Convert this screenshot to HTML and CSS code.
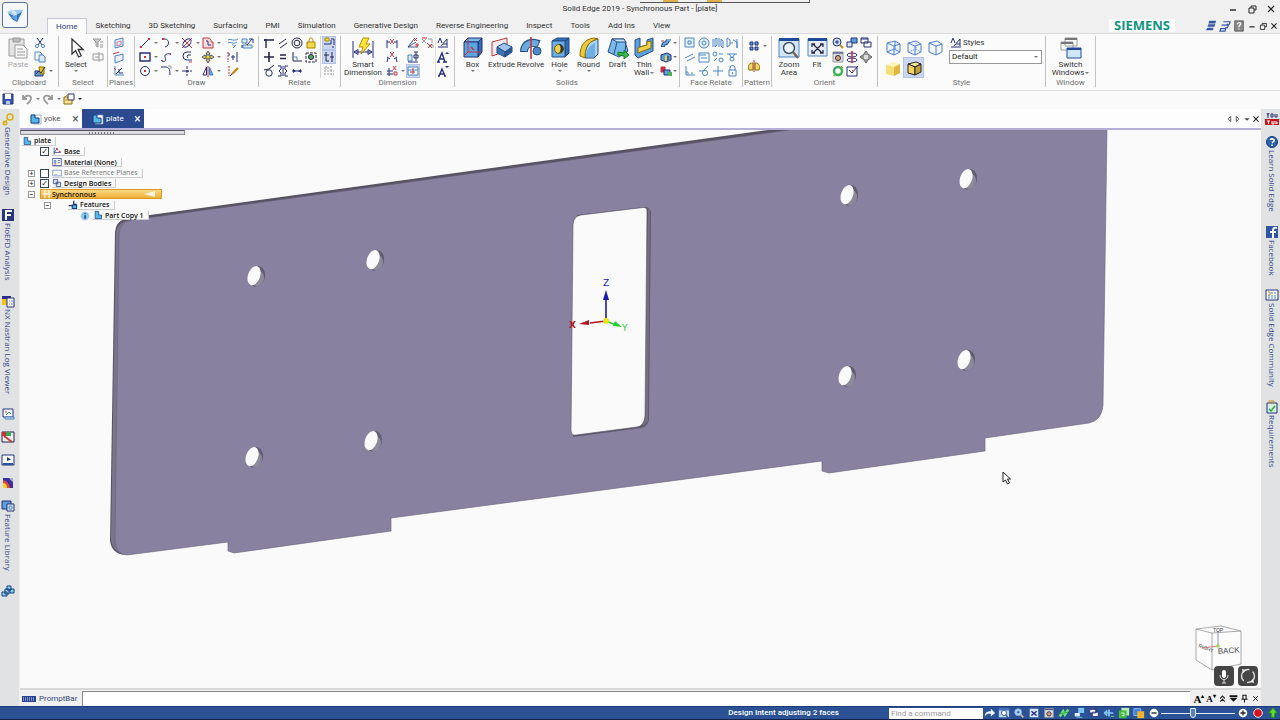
FILE: index.html
```
<!DOCTYPE html>
<html lang="en">
<head>
<meta charset="utf-8">
<title>Solid Edge 2019 - Synchronous Part - [plate]</title>
<link rel="stylesheet" href="styles.css">
</head>
<body>
<svg class="sprite" aria-hidden="true">
  <!-- clipboard and select -->
  <symbol id="paste" viewBox="0 0 24 24"><path class="sg" fill="#e4e4e4" d="M3 3h15v17H3z"/><path class="sg" fill="#bbb" d="M7 2h7v4H7z"/><path class="sg" fill="#fafafa" d="M9 9h8l4 4v9H9z"/><path class="sg" d="M11 13h6M11 16h8M11 19h8"/></symbol>
  <symbol id="cut" viewBox="0 0 14 14"><path class="sn" d="M4 2l5 7M10 2L5 9"/><circle class="sb" cx="4" cy="10" r="1.6"/><circle class="sb" cx="10" cy="10" r="1.6"/></symbol>
  <symbol id="copy" viewBox="0 0 14 14"><path class="sb" fill="#fff" d="M2 2h5l2 2v6H2z"/><path class="sb" fill="#dceaf8" d="M6 5h4l2 2v5H6z"/></symbol>
  <symbol id="props" viewBox="0 0 14 14"><path class="sn fb" d="M2 7h8v5H2z"/><path fill="#e8c21c" stroke="#8a6d00" d="M6 3h5v7H7z"/><path class="sn" d="M3 10l3-3 2 2 4-6"/></symbol>
  <symbol id="arrow" viewBox="0 0 24 24"><path fill="#fff" stroke="#333" stroke-width="1.3" d="M8 3v15l3.600-3.500 3 6.500 2.600-1.200-3-6.300h5z"/></symbol>
  <symbol id="filter" viewBox="0 0 14 14"><path class="sg" fill="#ccc" d="M2 3h8L7 6v5L5 10V6z"/><path class="sg" d="M9 6h3M9 9h3M9 11h3"/></symbol>
  <symbol id="selbox" viewBox="0 0 14 14"><path class="sg" d="M2 4h10v6H2zM4 7h4M8 2v10"/></symbol>
  <!-- planes -->
  <symbol id="plane1" viewBox="0 0 14 14"><path class="sb" fill="#eef" d="M3 4l8-2v8l-8 2z"/><path class="sr" stroke-width=".6" d="M5 6l4-1v4l-4 1z"/></symbol>
  <symbol id="plane2" viewBox="0 0 14 14"><path class="sb" fill="#eef" d="M3 6l8-2v6l-8 3z"/><path class="sr" d="M1 4l6-2"/></symbol>
  <symbol id="plane3" viewBox="0 0 14 14"><path class="sb" d="M3 2v9h9"/><path class="sn" d="M4 10l6-6M7 5v4h4"/><path class="sr" d="M2 4l2 2"/></symbol>
  <!-- draw -->
  <symbol id="line" viewBox="0 0 14 14"><path class="sn" d="M3 11l8-8"/><path class="fr" d="M2 10h2v2H2zM10 2h2v2h-2z"/></symbol>
  <symbol id="arc" viewBox="0 0 14 14"><path class="sn" d="M4 3c7-1 7 7 2 8"/><path class="fr" d="M3 2h2v2H3z"/></symbol>
  <symbol id="trim" viewBox="0 0 14 14"><path class="sr" d="M2 2l10 10M12 2L2 12"/><ellipse class="sn" cx="7" cy="7" rx="5" ry="3" transform="rotate(-45 7 7)"/></symbol>
  <symbol id="offset" viewBox="0 0 14 14"><path class="sr" fill="#f8dede" d="M2 2h5a3 3 0 0 1 3 4h2v6H2z"/><path class="sn" d="M5 5h2v4h3"/></symbol>
  <symbol id="wave" viewBox="0 0 14 14"><path class="sb" d="M2 4c3-2 5 2 10-1M2 7c3-2 5 2 9-1M6 9c1-1 2 2 4 0l-3 3"/></symbol>
  <symbol id="convert" viewBox="0 0 14 14"><path class="sb" fill="#dceaf8" d="M2 3h5v4H2zM3 9h9v3H3z"/><path class="sn" d="M2 12V9M7 9l5-6M9 3h4v4"/><path class="so" d="M5 7l3 3"/></symbol>
  <symbol id="rect" viewBox="0 0 14 14"><path class="sn" stroke-width="1.400" d="M2 3h10v8H2z"/><path class="fr" d="M6 6h2v2H6z"/></symbol>
  <symbol id="curve" viewBox="0 0 14 14"><path class="sn" d="M3 11c4 2 4-2 3-4s2-4 5-3"/><path class="fr" d="M2 10h2v1H2zM11 3h1v2h-1z"/></symbol>
  <symbol id="cshape" viewBox="0 0 14 14"><path class="sn" d="M11 2H7a4 4 0 0 0 0 8h5M11 5H8a2 2 0 0 0 0 3"/><path class="sr" d="M9 12h3"/></symbol>
  <symbol id="move" viewBox="0 0 14 14"><path class="sn" fill="#f4d03c" stroke-width=".8" d="M7 1l2 3H8v2h2V5l3 2-3 2V8H8v2h1l-2 3-2-3h1V8H4v1L1 7l3-2v1h2V4H5z"/></symbol>
  <symbol id="ptlines" viewBox="0 0 14 14"><path class="sn" d="M11 2v10M3 3v3M5 7h4M7 5v5"/><path class="sr" stroke-dasharray="2 1" d="M2 2v10"/></symbol>
  <symbol id="circle" viewBox="0 0 14 14"><circle class="sn" cx="7" cy="7" r="4.500"/><path class="fr" d="M6 6h2v2H6z"/></symbol>
  <symbol id="fillet" viewBox="0 0 14 14"><path class="sn" d="M2 3h4c4 0 5 2 5 8"/><path class="sg" d="M9 2h3v3"/></symbol>
  <symbol id="split" viewBox="0 0 14 14"><path class="sn" stroke-dasharray="3 1" d="M2 7h10M7 2v10"/><path class="sn" d="M5 7h4"/></symbol>
  <symbol id="mirror" viewBox="0 0 14 14"><path class="sn" d="M2 11l3.500-8v8z"/><path class="sb fb" d="M12 11L8.500 3v8z"/><path class="sr" d="M7 2v11"/></symbol>
  <symbol id="pencil" viewBox="0 0 14 14"><path class="sr" stroke-dasharray="2 1" d="M3 2v10"/><path class="so" stroke-width="2.400" d="M6 10l6-6"/><path class="sn" d="M4 12l2-2"/></symbol>
  <!-- relate -->
  <symbol id="connect" viewBox="0 0 14 14"><path class="sk" stroke-width="1.400" d="M4 12V4h8"/><path class="fn" d="M2 3h3v2H2z"/></symbol>
  <symbol id="parallel" viewBox="0 0 14 14"><path class="sk" d="M3 8l7-5M4 12l7-5"/></symbol>
  <symbol id="concentric" viewBox="0 0 14 14"><circle class="sk" cx="7" cy="7" r="5"/><circle class="sk" cx="7" cy="7" r="2.800"/></symbol>
  <symbol id="lock" viewBox="0 0 14 14"><path class="so" d="M5 6V4a2 2 0 0 1 4 0v2"/><path fill="#f3d94b" stroke="#a88400" d="M3 6h8v6H3z"/></symbol>
  <symbol id="plus" viewBox="0 0 14 14"><path class="sk" stroke-width="1.600" d="M2 7h10M7 2v10"/></symbol>
  <symbol id="equal" viewBox="0 0 14 14"><path class="sk" stroke-width="1.600" d="M4 5h6M4 8.500h6"/></symbol>
  <symbol id="perp" viewBox="0 0 14 14"><path class="sk" d="M3 2v9h9"/><path class="sb" d="M3 7h4v4"/></symbol>
  <symbol id="rigid" viewBox="0 0 14 14"><path class="sk" stroke-dasharray="3 1" d="M2 3h10v9H2z"/><circle class="sk fg" cx="7" cy="7" r="2.500"/></symbol>
  <symbol id="tangent" viewBox="0 0 14 14"><circle class="sn" cx="7" cy="9" r="3.200"/><path class="sk" d="M2 6l5-1 5-4"/></symbol>
  <symbol id="symm" viewBox="0 0 14 14"><path class="sn" d="M2 2h3v3L3 7l2 2v3H2M12 2H9v3l2 2-2 2v3h3M7 2v10"/></symbol>
  <symbol id="collin" viewBox="0 0 14 14"><path class="sn" d="M2 7h10"/><path class="fn" d="M3 5l3 2-3 2zM11 5L8 7l3 2z"/></symbol>
  <symbol id="maintain" viewBox="0 0 14 14"><path fill="#f3d94b" stroke="#a88400" d="M3 2h4v3H3z"/><path class="sn" d="M2 8h7M9 3h3v6M10 11h2M9 4v4"/></symbol>
  <symbol id="handles" viewBox="0 0 14 14"><path class="sk" d="M4 2v9h3M10 2v10M2 5h5M8 7h4"/></symbol>
  <symbol id="hgray" viewBox="0 0 14 14"><path class="sg" stroke-dasharray="2 1" d="M2 4h5M9 2v5M2 7h10M2 10h10M4 2v4"/></symbol>
  <!-- dimension -->
  <symbol id="smart" viewBox="0 0 24 24"><path class="sn" d="M2 5v17M22 5v17M3 16h18M3 16l4-2.500v5zM21 16l-4-2.500v5z"/><path fill="#ffe53b" stroke="#b98f00" d="M12 2l6 0-3 6h4l-9 10 2-7H8z"/></symbol>
  <symbol id="dist" viewBox="0 0 14 14"><path class="sn" d="M2 4v8M12 4v8M2 6h3M9 6h3"/><path class="sr" d="M5 3l4 5M9 3L5 8"/></symbol>
  <symbol id="angle" viewBox="0 0 14 14"><path class="sn" d="M3 8l-1 4M11 8l1 4M5 9l-3-2M9 9l3-2"/><path class="sr" d="M5 2l4 5M9 2L5 7"/></symbol>
  <symbol id="coord" viewBox="0 0 14 14"><path class="sn" d="M2 7h6M2 10h6M4 4v8"/><path class="sr" d="M8 2l3 4M11 2L8 6M9 8h3v3H9z"/></symbol>
  <symbol id="angc" viewBox="0 0 14 14"><path class="sn" stroke-width=".8" d="M2 11h10M2 11l6-8M2 11l8-5"/><path class="sr" d="M8 2l3 3M11 2L8 5M10 8h2v2h-2z"/></symbol>
  <symbol id="symd" viewBox="0 0 14 14"><path class="sg" d="M2 3l4 4M6 3L2 7M8 3h4v4M9 9h4v3"/><path class="sr" d="M2 2h5M7 7l5 5M12 8l-4 4"/></symbol>
  <symbol id="attach" viewBox="0 0 14 14"><path class="sb" fill="#dceaf8" d="M2 11V5h4v6z"/><path class="sn" d="M2 12h10M8 2h4M10 2v9M8 5h4v3H8z"/></symbol>
  <symbol id="table" viewBox="0 0 14 14"><path class="sb" fill="#fff" d="M2 3h10v8H2zM2 6h10"/><path class="sr" d="M7 4v6M4 8h5"/></symbol>
  <symbol id="aslash" viewBox="0 0 14 14"><path class="sn" d="M2 7l2-5 2 5M5 10l6-7v7M2 11h10M7 8h4"/></symbol>
  <symbol id="abig" viewBox="0 0 14 14"><path class="sn" stroke-width="1.400" d="M2 12l4-9 3 9M4 9h4M1 12h3M7 12h4"/><path class="fn" d="M9 4l2-2 2 2z"/></symbol>
  <symbol id="asmall" viewBox="0 0 14 14"><path class="sn" stroke-width="1.400" d="M3 12l3-7 3 7M4 10h4M2 12h2M8 12h2"/><path class="fn" d="M9 2h4l-2 2z"/></symbol>
  <!-- solids -->
  <symbol id="box" viewBox="0 0 24 24"><path fill="#7db8e6" stroke="#24307a" d="M3 6l4-4h14l-4 4z"/><path fill="#2f6fb4" stroke="#24307a" d="M17 6l4-4v14l-4 5z"/><path fill="#5aa6e0" stroke="#24307a" d="M3 6h14v15H3z"/><path class="sr" d="M7 3v13h13M7 16l-4 4"/><path class="sr" stroke-width="1.500" d="M10 11l3 3"/></symbol>
  <symbol id="extrude" viewBox="0 0 24 24"><path class="sr" fill="#f6eeee" d="M2 6l15-4v13L2 20z"/><path fill="#9fc6ea" stroke="#244f86" d="M7 11l7-4 8 4-7 5z"/><path fill="#3d77b6" stroke="#244f86" d="M7 11l8 5v5l-8-4z"/><path fill="#2b5a95" stroke="#244f86" d="M22 11v5l-7 5v-5z"/></symbol>
  <symbol id="revolve" viewBox="0 0 24 24"><path stroke="#244f86" stroke-width="8" d="M5 16c0-9 8-11 15-8"/><path stroke="#6aaade" stroke-width="6" d="M5 15c1-8 8-9 14-7"/><circle cx="18" cy="15" r="4" fill="#4d8ccb" stroke="#244f86"/><path class="sr" stroke-width="1.600" d="M12 1v22"/></symbol>
  <symbol id="hole" viewBox="0 0 24 24"><path fill="#2f6fb4" stroke="#244f86" d="M4 5l5-3h12l-4 3zM17 5l4-3v15l-4 4z"/><path fill="#69aee6" stroke="#244f86" d="M4 5h13v16H4z"/><circle cx="11" cy="13" r="4.500" fill="#f0d24e" stroke="#7a5c00"/><path fill="#333" d="M11 8a4.500 4.500 0 0 1 0 9 7 7 0 0 0 0-9z"/></symbol>
  <symbol id="round" viewBox="0 0 24 24"><path fill="#a9d2f3" stroke="#244f86" d="M8 22C8 10 12 5 21 3v15l-4 4z"/><path fill="#f0c93a" stroke="#8a6d00" d="M3 20C3 9 8 3 17 2l4 1C12 5 8 10 8 22z"/><path fill="#6fb0e4" d="M9 21c0-7 3-11 9-14v14z"/></symbol>
  <symbol id="draft" viewBox="0 0 24 24"><path fill="#79b8ea" stroke="#244f86" d="M6 3h12l4 12-9 6L2 16z"/><path fill="#cfe6f8" stroke="#244f86" d="M6 3l5 3h9l-2-3z"/><path stroke="#244f86" d="M11 6L8 18M20 6l-1 10"/><path fill="#35b54a" stroke="#157a26" d="M12 16l6 1v-3l5 5-5 4v-3l-6-1z"/></symbol>
  <symbol id="thin" viewBox="0 0 24 24"><path fill="#5aa0dc" stroke="#244f86" d="M3 4l5-2v9l7-2V4l6-2v13L6 22l-3-3z"/><path fill="#f0d24e" stroke="#8a6d00" d="M8 11l7-2v-3l4-1v7L6 17v-5z"/></symbol>
  <symbol id="sweep" viewBox="0 0 14 14"><path stroke="#244f86" stroke-width="4" d="M4 11c0-6 3-1 5-7"/><path stroke="#69aee6" stroke-width="2" d="M4 10c1-5 4-1 5-6h3"/><path class="sr" d="M2 5h3"/></symbol>
  <symbol id="block" viewBox="0 0 14 14"><path class="sn fb" d="M2 5l6-2 4 2v5l-5 2-5-2z"/><path fill="#f0d24e" d="M6 6l2-1v6H6z"/><path class="sk" d="M9 6v4"/></symbol>
  <symbol id="union" viewBox="0 0 14 14"><path class="sr fr" d="M2 3h4v5H2z"/><path class="sn fb" d="M5 6h6v5H5z"/><path class="fg" d="M9 8h4v4H9z"/></symbol>
  <!-- face relate -->
  <symbol id="coplanar" viewBox="0 0 14 14"><path class="sb" fill="#e5f1fb" d="M2 2h9v9H2zM5 5h3v3H5z"/></symbol>
  <symbol id="fconc" viewBox="0 0 14 14"><circle class="sb" cx="7" cy="7" r="5" fill="#e5f1fb"/><circle class="sb" cx="7" cy="7" r="2"/></symbol>
  <symbol id="fsym" viewBox="0 0 14 14"><path class="sb" d="M2 3v8M4 3v8l2-2V2zM8 2v9M10 3v7l2 2V5z"/></symbol>
  <symbol id="foff" viewBox="0 0 14 14"><path class="sb" d="M2 2v9l3-2V4zM5 7h3M8 4l4 2v6M12 3v9"/></symbol>
  <symbol id="fpar" viewBox="0 0 14 14"><path class="sb" d="M2 8l8-4M4 11l8-4"/></symbol>
  <symbol id="falign" viewBox="0 0 14 14"><path class="sb" d="M2 3h10v9H2zM4 8h6M2 5h7"/></symbol>
  <symbol id="fequal" viewBox="0 0 14 14"><circle class="sb" cx="4" cy="4" r="2"/><circle class="sb" cx="10" cy="10" r="2"/><path class="sb" d="M3 11l3-3M8 4h4"/></symbol>
  <symbol id="fhoriz" viewBox="0 0 14 14"><path class="sb" d="M2 4h10M4 4l3 4 3-4"/><circle class="sb" cx="7" cy="9" r="2"/></symbol>
  <symbol id="fperp" viewBox="0 0 14 14"><path class="sb" d="M3 2v9h9M3 8h2v3M8 9h2"/></symbol>
  <symbol id="ftan" viewBox="0 0 14 14"><circle class="sb" cx="8" cy="9" r="2.600"/><path class="sb" d="M2 7h4l5-5"/></symbol>
  <symbol id="fplus" viewBox="0 0 14 14"><path class="sb" d="M2 7h10M7 2v10"/></symbol>
  <symbol id="flock" viewBox="0 0 14 14"><path class="sb" d="M4 6h7v6H4zM5 6V4a2 2 0 0 1 5 0v2M7.500 8v2"/></symbol>
  <!-- pattern -->
  <symbol id="pattern" viewBox="0 0 14 14"><path class="sn fb" d="M3 3h3v3H3zM8 3h3v3H8zM3 8h3v3H3zM8 8h3v3H8z"/></symbol>
  <symbol id="pmirror" viewBox="0 0 14 14"><path fill="#f4d86a" stroke="#8a6d00" d="M6 4c-5 0-5 4-4 7h4zM8 4c5 0 5 4 4 7H8z"/><path class="sr" d="M7 1v12"/></symbol>
  <!-- orient -->
  <symbol id="zoomarea" viewBox="0 0 24 24"><path class="sb" fill="#d5e4f6" d="M2 3h20v18H2z"/><path fill="#1f4a9a" d="M2 2h20v3H2z"/><circle cx="12" cy="12" r="5.500" fill="#eaf6fd" stroke="#456" stroke-width="1.500"/><path stroke="#765" stroke-width="2.500" d="M16 16l5 6"/></symbol>
  <symbol id="fit" viewBox="0 0 24 24"><path class="sb" fill="#e4ecf8" d="M3 3h19v17H3z"/><path fill="#1f4a9a" d="M3 2h19v3H3z"/><path class="sk" stroke-width="1.300" d="M8 8l9 9M17 8l-9 9M7 11V8h3M15 8h3v3M18 14v3h-3M10 17H7v-3"/></symbol>
  <symbol id="zoom" viewBox="0 0 14 14"><circle class="sn" cx="6" cy="6" r="4" fill="#cfe4f8"/><path class="sn" d="M6 4v4M4 6h4"/><path class="so" stroke-width="2" d="M9 9l3 3"/></symbol>
  <symbol id="pan" viewBox="0 0 14 14"><path class="sn fb" d="M6 2h6v5H6z"/><path class="sn" fill="#dceaf8" d="M2 6h5v5H2z"/></symbol>
  <symbol id="windows" viewBox="0 0 14 14"><path class="sn" fill="#fff" d="M2 2h7v5H2zM5 6h7v5H5z"/><path class="sn" d="M2 3h7"/></symbol>
  <symbol id="camera" viewBox="0 0 14 14"><path class="sg" fill="#ddd" d="M2 2h10v10H2z"/><path class="sn" d="M2 3h10"/><circle class="sk" cx="7" cy="8" r="2.500" fill="#d9a577"/></symbol>
  <symbol id="spin" viewBox="0 0 14 14"><ellipse class="sn" cx="7" cy="5" rx="5" ry="2"/><ellipse class="sn" cx="7" cy="10" rx="5" ry="2"/><path class="sr" stroke-width="1.600" d="M7 1v12"/></symbol>
  <symbol id="graymove" viewBox="0 0 14 14"><path fill="#999" stroke="#666" d="M7 1l2 3 4 3-4 3-2 3-2-3-4-3 4-3z"/><path fill="#ddd" d="M5 5h4v4H5z"/></symbol>
  <symbol id="rotate" viewBox="0 0 14 14"><circle cx="7" cy="7" r="4" stroke="#35b54a" stroke-width="2.400"/><path class="sb" d="M3 7a4 4 0 0 1 4-4"/><path class="so" d="M10 2l2 2M2 11l2 1"/></symbol>
  <symbol id="sketchview" viewBox="0 0 14 14"><path class="sn" fill="#fff" d="M2 3h10v9H2z"/><path class="sk" d="M4 6l3 3 6-7"/><path class="sr" d="M7 6l2 2"/></symbol>
  <symbol id="cubewire" viewBox="0 0 20 20"><path class="sv" fill="#eef4fc" d="M4 6l8-2 5 3v8l-6 3-7-3zM4 6l7 3 6-2M11 9v9M4 15l7-3 6 3M12 4v8"/></symbol>
  <symbol id="cubedash" viewBox="0 0 20 20"><path class="sv" fill="#f2f6fc" d="M4 6l8-2 5 3v8l-6 3-7-3zM4 6l7 3 6-2M11 9v9"/><path class="sv" stroke-dasharray="1 1" d="M12 4v8l5 3M12 12l-8 3"/></symbol>
  <symbol id="cubeline" viewBox="0 0 20 20"><path class="sv" fill="#f6f8fd" d="M4 6l8-2 5 3v8l-6 3-7-3zM4 6l7 3 6-2M11 9v9"/></symbol>
  <symbol id="cubefill" viewBox="0 0 20 20"><path fill="#fdf3b8" d="M3 7l8-3 6 2-6 3z"/><path fill="#f7df78" d="M3 7l8 2v9l-8-2z"/><path fill="#e0b740" d="M11 9l6-3v9l-6 3z"/></symbol>
  <symbol id="cubeedge" viewBox="0 0 20 20"><path fill="#fbeb9a" stroke="#222" d="M4 6l8-2 5 2-6 3z"/><path fill="#f2d35c" stroke="#222" d="M4 6l7 3v8l-7-2z"/><path fill="#c89f35" stroke="#222" d="M11 9l6-3v8l-6 3z"/></symbol>
  <symbol id="switch" viewBox="0 0 24 24"><path class="sg" fill="#fff" d="M6 2h12v8H6zM2 6h12v8H2z"/><path stroke="#777" stroke-width="2" d="M6 3h12M2 7h12"/><path fill="#cfe6fb" stroke="#1f4a9a" d="M8 12h14v10H8z"/><path stroke="#1f4a9a" stroke-width="2" d="M8 13h14"/></symbol>
  <!-- quick access, tabs, tree -->
  <symbol id="save" viewBox="0 0 14 14"><path fill="#3c55b5" stroke="#27357c" d="M2 2h10v10H2z"/><path fill="#fff" d="M4 2h6v5H4z"/><path fill="#bcd" d="M5 9h4v3H5z"/></symbol>
  <symbol id="undo" viewBox="0 0 14 14"><path class="sg" stroke-width="1.800" d="M3 3v4h4M3 7c3-5 9-4 8 0-1 3-3 4-4 5"/></symbol>
  <symbol id="redo" viewBox="0 0 14 14"><path class="sg" stroke-width="1.800" d="M11 3v4H7M11 7C8 2 2 3 3 7c1 3 3 4 4 5"/></symbol>
  <symbol id="sheet" viewBox="0 0 14 14"><path fill="#f8e3a0" stroke="#8a6d00" d="M2 5h8v7H2z"/><path class="sn" fill="#fff" d="M6 2h6v6H6z"/><path class="so" d="M3 5l3-3M3 8h6"/></symbol>
  <symbol id="part" viewBox="0 0 14 14"><path fill="#fff" stroke="#7d93ad" stroke-width=".7" d="M4 3h8v9H4z"/><path fill="#55b7ea" stroke="#123f7a" d="M2 3h4v3h4v5H2z"/></symbol>
  <symbol id="partsm" viewBox="0 0 14 14"><path fill="#55b7ea" stroke="#123f7a" d="M3 2h5v5h4v5H3z"/></symbol>
  <symbol id="axes" viewBox="0 0 14 14"><path class="sn" d="M3 2v10M3 9h9M3 9l5-6"/><path class="sr" stroke-width="1.600" d="M6 3l2 3M10 7l2 2"/></symbol>
  <symbol id="material" viewBox="0 0 14 14"><path class="sn" fill="#fff" d="M1 2h12v10H1z"/><path class="fb" d="M3 4h3v5H3z"/><path class="sr" d="M3 10h3"/><path class="sn" d="M8 5h3M8 8h3"/></symbol>
  <symbol id="refplane" viewBox="0 0 14 14"><path class="sb" fill="#fff" d="M1 3h12v8H1z"/><path class="sg" d="M3 9h4"/></symbol>
  <symbol id="bodies" viewBox="0 0 14 14"><path class="sn" fill="#cfe4f8" d="M2 2h6v6H2zM6 6h6v6H6z"/></symbol>
  <symbol id="sync" viewBox="0 0 14 14"><path stroke="#fff" stroke-width="1.500" d="M4 1v12M10 1v12M1 7h12"/></symbol>
  <symbol id="features" viewBox="0 0 14 14"><path fill="#55b7ea" stroke="#123f7a" stroke-width="1.500" d="M6 7h6v5H6z"/><path class="sn" stroke-width="1.800" d="M1 8h5M8 1v5h4"/></symbol>
  <symbol id="info" viewBox="0 0 14 14"><circle cx="7" cy="7" r="6" fill="#8ec3ea" stroke="#d4e7f5"/><path stroke="#0b3d83" stroke-width="2" d="M7 3v1.500M7 6v5"/></symbol>
  <!-- side rails -->
  <symbol id="key" viewBox="0 0 14 14"><path stroke="#d9b20e" stroke-width="1.600" d="M6 8l-3 3"/><circle cx="9" cy="5" r="3" stroke="#d9b20e" stroke-width="1.600"/><circle cx="4" cy="11" r="1.800" stroke="#d9b20e" stroke-width="1.400"/></symbol>
  <symbol id="flo" viewBox="0 0 14 14"><path fill="#26357e" d="M1 1h12v12H1z"/><path stroke="#fff" stroke-width="2" d="M5 12V3h6M5 7h5"/></symbol>
  <symbol id="nastran" viewBox="0 0 14 14"><path fill="#d33" d="M1 2h6v9H1z"/><path fill="#f2c21d" d="M1 5h5v6H1z"/><path fill="#302a8c" d="M1 2h9v3H1z"/><path class="sn" fill="#fff" d="M6 4h7v9H6z"/><path class="sb" d="M8 7h1M10 7h2M8 10h1M10 10h2"/></symbol>
  <symbol id="copydoc" viewBox="0 0 14 14"><path class="sn" fill="#fff" d="M2 2h10v8H2z"/><path class="sb" fill="#cde" d="M4 10h9v2H4z"/><path stroke="#3a4" d="M5 8l3-3 2 2"/><path class="sr" d="M4 5h2"/></symbol>
  <symbol id="gauge" viewBox="0 0 14 14"><path class="sk" fill="#eee" d="M1 2h12v10H1z"/><path fill="#c33" d="M1 2h4v4H1z"/><path fill="#3a5" d="M5 2h5v4H5z"/><path class="sr" stroke-width="1.600" d="M3 6l8 6"/></symbol>
  <symbol id="movie" viewBox="0 0 14 14"><path class="sn" fill="#fff" d="M1 2h12v10H1z"/><path class="fn" d="M6 4l4 2.500L6 8z"/><path stroke="#26579c" stroke-width="2" d="M2 11h10"/></symbol>
  <symbol id="heat" viewBox="0 0 14 14"><path fill="#3b2f9c" d="M2 2h10v10H2z"/><path fill="#d44" d="M2 4q6 1 7 8H2z"/><path fill="#f6d32a" d="M2 7q4 0 4 5H2z"/><path fill="#aac" d="M8 2h4v4q-2-1-4-4z"/></symbol>
  <symbol id="library" viewBox="0 0 14 14"><path class="sn fb" d="M1 2h9v8H1z"/><path class="sn" fill="#dff0fb" d="M6 5h7v7H6z"/><path class="sb" d="M8 7h3v3H8z"/></symbol>
  <symbol id="cubes" viewBox="0 0 14 14"><path fill="#8ed0f2" stroke="#123f7a" d="M6 2h4v4H6zM9 5h4v4H9zM4 5h4v5H4zM1 8h5v4H1z"/></symbol>
  <symbol id="youtube" viewBox="0 0 14 14"><path class="sn" d="M2 1l1 2 1-2M3 3v3M6 2h2v3H6zM10 2v3h2V2"/><path fill="#c4161c" d="M0 7h14v6H0z"/><path stroke="#fff" d="M2 9h3M3.500 9v3M7 9v3h2V9M11 9v3M11 11h2"/></symbol>
  <symbol id="learn" viewBox="0 0 14 14"><circle cx="7" cy="7" r="5.500" fill="#2b62b0" stroke="#163a78"/><path stroke="#fff" stroke-width="1.500" d="M5 5c1-2 5-1 4 1L7 8M7 9.500v1.500"/></symbol>
  <symbol id="fb" viewBox="0 0 14 14"><path fill="#2f55a4" d="M1 1h12v12H1z"/><path stroke="#fff" stroke-width="2" d="M12 3c-3-1-4 0-4 3v7M5 7h6"/></symbol>
  <symbol id="community" viewBox="0 0 14 14"><path class="sn" fill="#fff" d="M1 2h12v10H1z"/><path class="so" d="M3 4h2v3H3"/><path class="sb" stroke-dasharray="2 1" d="M6 5h6M3 8h9M3 10h9"/></symbol>
  <symbol id="reqs" viewBox="0 0 14 14"><path class="sn" fill="#d6f0de" d="M2 3h10v10H2z"/><path class="so" d="M4 4V1h5v3"/><path stroke="#2aa745" stroke-width="1.500" d="M4 9l2 2 4-5"/></symbol>
  <!-- window controls and status bar -->
  <symbol id="min" viewBox="0 0 14 14"><path stroke="#222" stroke-width="1.400" d="M4 8h6"/></symbol>
  <symbol id="restore" viewBox="0 0 14 14"><path stroke="#222" d="M6 6V4h5v4H9M4 6h5v5H4z"/></symbol>
  <symbol id="close" viewBox="0 0 14 14"><path stroke="#222" stroke-width="1.200" d="M4 4l6 6M10 4l-6 6"/></symbol>
  <symbol id="stack" viewBox="0 0 14 14"><path fill="#3456a8" d="M5 1h8l-1 3H4zM4 5h8l-1 3H3zM3 9h7l-1 3H1z"/></symbol>
  <symbol id="stack2" viewBox="0 0 14 14"><path stroke="#3456a8" stroke-width="1.300" d="M5 2h8l-1 3H9M3 6h8l-1 3H7M2 10h6l-1 3H1z"/></symbol>
  <symbol id="help" viewBox="0 0 14 14"><path fill="#8a8a8a" stroke="#555" d="M2 1h10v12H2z"/><path stroke="#fff" stroke-width="1.400" d="M5 5c0-3 5-2 4 0L7 7v1.500M7 10v1"/></symbol>
  <symbol id="tleft" viewBox="0 0 14 14"><path stroke="#444" d="M9 4v6L6 7z"/></symbol>
  <symbol id="tright" viewBox="0 0 14 14"><path stroke="#444" d="M5 4v6l3-3z"/></symbol>
  <symbol id="tdown" viewBox="0 0 14 14"><path fill="#444" d="M4 6h6l-3 3z"/></symbol>
  <symbol id="keyboard" viewBox="0 0 14 14"><path fill="#26428c" d="M0 4h14v6H0z"/><path stroke="#dfe8ff" stroke-dasharray="1 1" d="M1 6h12M1 8h12"/></symbol>
  <symbol id="chev" viewBox="0 0 14 14"><path stroke="#222" stroke-width="1.400" d="M4 7l3-3 3 3M4 11l3-3 3 3"/></symbol>
  <symbol id="bardown" viewBox="0 0 14 14"><path fill="#111" d="M2 3h10v2H2zM2 6h10l-5 5z"/></symbol>
  <symbol id="pin" viewBox="0 0 14 14"><path stroke="#111" stroke-width="1.300" d="M5 3h4v5H5zM3 8h8M7 8v4"/></symbol>
  <symbol id="go" viewBox="0 0 14 14"><path fill="#e6f2ff" d="M1 11c0-5 3-6 7-6V2l5 5-5 4V8c-3 0-5 0-7 3z"/></symbol>
  <symbol id="s-area" viewBox="0 0 14 14"><path fill="#b8d4f4" d="M1 2h12v10H1z"/><path fill="#3c6fc0" d="M1 2h12v2H1z"/><circle cx="7" cy="7" r="3" fill="#fff" stroke="#357"/><path stroke="#357" stroke-width="1.500" d="M9 9l3 4"/></symbol>
  <symbol id="s-zoom" viewBox="0 0 14 14"><circle cx="6" cy="6" r="4" fill="#bfe0ff" stroke="#6ea6e6"/><path stroke="#1f4a9a" d="M4 6h4M6 4v4"/><path stroke="#d9b78c" stroke-width="2" d="M9 9l3 3"/></symbol>
  <symbol id="s-fit" viewBox="0 0 14 14"><path fill="#d5e4fb" d="M2 2h10v10H2z"/><path class="sn" stroke-width="1.600" d="M4 5l6 5M10 5l-6 5"/></symbol>
  <symbol id="s-green" viewBox="0 0 14 14"><path stroke="#6fe36f" stroke-width="3" d="M2 11l4-6 2 4 4-6"/><path stroke="#1fa53a" d="M2 8l10-2"/></symbol>
  <symbol id="s-pan" viewBox="0 0 14 14"><path fill="#7cc3f5" d="M6 1h7v6H6z"/><path fill="#d8efff" d="M2 7h6v4H2z"/><path stroke="#7cc3f5" d="M4 12h7"/></symbol>
  <symbol id="s-move" viewBox="0 0 14 14"><path stroke="#87c7ff" stroke-width="2" d="M2 7h10M7 3v8M5 4L2 7l3 3"/><path stroke="#5ee07d" d="M9 11h4"/></symbol>
  <symbol id="s-play" viewBox="0 0 14 14"><path fill="#b8efb0" d="M4 1h9v9H4z"/><path fill="#45bd3f" d="M1 4h9v9H1z"/><path stroke="#fff" d="M4 7h3v3H5"/></symbol>
  <symbol id="s-win" viewBox="0 0 14 14"><path fill="#3f7fe0" stroke="#9cc3f7" d="M1 2h8v8H1z"/><path fill="#f2b52a" d="M5 5h8v8H5z"/></symbol>
  <symbol id="s-minus" viewBox="0 0 14 14"><circle cx="7" cy="7" r="5" fill="#fff"/><path stroke="#223" stroke-width="1.600" d="M4 7h6"/></symbol>
  <symbol id="s-plus" viewBox="0 0 14 14"><circle cx="7" cy="7" r="5" fill="#fff"/><path stroke="#223" stroke-width="1.600" d="M4 7h6M7 4v6"/></symbol>
  <symbol id="s-rec" viewBox="0 0 14 14"><circle cx="7" cy="7" r="5" fill="#d9121c" stroke="#fff"/></symbol>
  <symbol id="s-up" viewBox="0 0 14 14"><path fill="#5fe02e" stroke="#2b8a10" d="M7 1l5 6H9v5H5V7H2z"/></symbol>
</svg>

<header class="titlebar">
  <button class="app" aria-label="Application menu"><svg viewBox="0 0 24 24"><path fill="#9fc8ee" d="M4 9l5-2 11 0-1 3-10 3z"/><path fill="#2d74c4" d="M5 10l6 3 8-4-5 10-5-3z"/><path fill="#d3e7f8" d="M8 6l5 3 1 4-5-3z"/><path fill="#5aa3e0" d="M8 14l6-2v6z"/></svg></button>
  <div class="notch"></div>
  <h1>Solid Edge 2019 - Synchronous Part - [plate]</h1>
  <div class="wincontrols">
    <button aria-label="Minimize"><svg><use href="#min"/></svg></button>
    <button aria-label="Restore"><svg><use href="#restore"/></svg></button>
    <button aria-label="Close"><svg><use href="#close"/></svg></button>
  </div>
</header>

<nav class="tabs" aria-label="Ribbon tabs">
  <button class="tab active">Home</button><button class="tab">Sketching</button><button class="tab">3D Sketching</button><button class="tab">Surfacing</button><button class="tab">PMI</button><button class="tab">Simulation</button><button class="tab">Generative Design</button><button class="tab">Reverse Engineering</button><button class="tab">Inspect</button><button class="tab">Tools</button><button class="tab">Add Ins</button><button class="tab">View</button>
  <span class="brand">SIEMENS</span>
  <div class="doccontrols">
    <button aria-label="Cascade"><svg><use href="#stack"/></svg></button>
    <button aria-label="Tile"><svg><use href="#stack2"/></svg></button>
    <button aria-label="Help"><svg><use href="#help"/></svg></button>
    <button class="sm" aria-label="Minimize document"><svg><use href="#min"/></svg></button>
    <button class="sm" aria-label="Restore document"><svg><use href="#restore"/></svg></button>
    <button class="sm" aria-label="Close document"><svg><use href="#close"/></svg></button>
  </div>
</nav>

<section class="ribbon" aria-label="Home ribbon">
  <div class="group clip"><div class="tools">
    <button class="big off"><svg><use href="#paste"/></svg>Paste</button>
    <div class="grid">
      <button aria-label="Cut"><svg><use href="#cut"/></svg></button>
      <button aria-label="Copy"><svg><use href="#copy"/></svg></button>
      <button class="split" aria-label="Copy properties"><svg><use href="#props"/></svg><i></i></button>
    </div></div><h2>Clipboard</h2></div>
  <div class="group sel"><div class="tools">
    <button class="big"><svg><use href="#arrow"/></svg>Select<i></i></button>
    <div class="grid">
      <button aria-label="Selection filter"><svg><use href="#filter"/></svg></button>
      <button aria-label="Selection options"><svg><use href="#selbox"/></svg></button>
    </div></div><h2>Select</h2></div>
  <div class="group planes"><div class="tools"><div class="grid">
      <button aria-label="Coincident plane"><svg><use href="#plane1"/></svg></button>
      <button aria-label="More planes"><svg><use href="#plane2"/></svg></button>
      <button aria-label="Coordinate system"><svg><use href="#plane3"/></svg></button>
    </div></div><h2>Planes</h2></div>
  <div class="group draw"><div class="tools"><div class="grid">
      <button class="split" aria-label="Line"><svg><use href="#line"/></svg><i></i></button>
      <button class="split" aria-label="Rectangle"><svg><use href="#rect"/></svg><i></i></button>
      <button class="split" aria-label="Circle"><svg><use href="#circle"/></svg><i></i></button>
      <button class="split" aria-label="Arc"><svg><use href="#arc"/></svg><i></i></button>
      <button aria-label="Curve"><svg><use href="#curve"/></svg></button>
      <button class="split" aria-label="Fillet"><svg><use href="#fillet"/></svg><i></i></button>
      <button class="split" aria-label="Trim"><svg><use href="#trim"/></svg><i></i></button>
      <button aria-label="Trim corner"><svg><use href="#cshape"/></svg></button>
      <button aria-label="Split"><svg><use href="#split"/></svg></button>
      <button class="split" aria-label="Offset"><svg><use href="#offset"/></svg><i></i></button>
      <button class="split" aria-label="Move"><svg><use href="#move"/></svg><i></i></button>
      <button class="split" aria-label="Mirror"><svg><use href="#mirror"/></svg><i></i></button>
    </div><div class="grid spaced">
      <button aria-label="Project to sketch"><svg><use href="#wave"/></svg></button>
      <button aria-label="Construction"><svg><use href="#ptlines"/></svg></button>
      <button aria-label="Clean sketch"><svg><use href="#pencil"/></svg></button>
      <button aria-label="Convert"><svg><use href="#convert"/></svg></button>
    </div></div><h2>Draw</h2></div>
  <div class="group relate"><div class="tools"><div class="grid">
      <button aria-label="Connect"><svg><use href="#connect"/></svg></button>
      <button aria-label="Horizontal/Vertical"><svg><use href="#plus"/></svg></button>
      <button aria-label="Tangent"><svg><use href="#tangent"/></svg></button>
      <button aria-label="Parallel"><svg><use href="#parallel"/></svg></button>
      <button aria-label="Equal"><svg><use href="#equal"/></svg></button>
      <button aria-label="Symmetric"><svg><use href="#symm"/></svg></button>
      <button aria-label="Concentric"><svg><use href="#concentric"/></svg></button>
      <button aria-label="Perpendicular"><svg><use href="#perp"/></svg></button>
      <button aria-label="Collinear"><svg><use href="#collin"/></svg></button>
      <button aria-label="Lock"><svg><use href="#lock"/></svg></button>
      <button aria-label="Rigid set"><svg><use href="#rigid"/></svg></button>
    </div><div class="grid ruled">
      <button class="on" aria-label="Maintain relationships"><svg><use href="#maintain"/></svg></button>
      <button class="on" aria-label="Relationship handles"><svg><use href="#handles"/></svg></button>
      <button aria-label="Relationship assistant"><svg><use href="#hgray"/></svg></button>
    </div></div><h2>Relate</h2></div>
  <div class="group dim"><div class="tools">
    <button class="big"><svg><use href="#smart"/></svg>Smart<br>Dimension</button>
    <div class="grid">
      <button aria-label="Distance between"><svg><use href="#dist"/></svg></button>
      <button aria-label="Angle between"><svg><use href="#angle"/></svg></button>
      <button class="split" aria-label="Coordinate dimension"><svg><use href="#coord"/></svg><i></i></button>
      <button aria-label="Angular coordinate"><svg><use href="#angc"/></svg></button>
      <button aria-label="Attach"><svg><use href="#attach"/></svg></button>
      <button class="on" aria-label="Dimension table"><svg><use href="#table"/></svg></button>
      <button aria-label="Symmetric diameter"><svg><use href="#symd"/></svg></button>
    </div><div class="grid ruled2">
      <button aria-label="Text style"><svg><use href="#aslash"/></svg></button>
      <button aria-label="Increase text"><svg><use href="#abig"/></svg></button>
      <button aria-label="Decrease text"><svg><use href="#asmall"/></svg></button>
    </div></div><h2>Dimension</h2></div>
  <div class="group solids"><div class="tools">
    <button class="big"><svg><use href="#box"/></svg>Box<i></i></button>
    <button class="big"><svg><use href="#extrude"/></svg>Extrude</button>
    <button class="big"><svg><use href="#revolve"/></svg>Revolve</button>
    <button class="big"><svg><use href="#hole"/></svg>Hole<i></i></button>
    <button class="big"><svg><use href="#round"/></svg>Round<i></i></button>
    <button class="big"><svg><use href="#draft"/></svg>Draft</button>
    <button class="big narrow"><svg><use href="#thin"/></svg>Thin<span>Wall<i></i></span></button>
    <div class="grid">
      <button class="split" aria-label="Sweep"><svg><use href="#sweep"/></svg><i></i></button>
      <button class="split" aria-label="Rib"><svg><use href="#block"/></svg><i></i></button>
      <button class="split" aria-label="Union"><svg><use href="#union"/></svg><i></i></button>
    </div></div><h2>Solids</h2></div>
  <div class="group face"><div class="tools"><div class="grid">
      <button aria-label="Coplanar"><svg><use href="#coplanar"/></svg></button>
      <button aria-label="Parallel faces"><svg><use href="#fpar"/></svg></button>
      <button aria-label="Perpendicular faces"><svg><use href="#fperp"/></svg></button>
      <button aria-label="Concentric faces"><svg><use href="#fconc"/></svg></button>
      <button aria-label="Aligned holes"><svg><use href="#falign"/></svg></button>
      <button aria-label="Tangent faces"><svg><use href="#ftan"/></svg></button>
      <button aria-label="Symmetric faces"><svg><use href="#fsym"/></svg></button>
      <button aria-label="Equal radius"><svg><use href="#fequal"/></svg></button>
      <button aria-label="Horizontal or vertical"><svg><use href="#fplus"/></svg></button>
      <button aria-label="Offset faces"><svg><use href="#foff"/></svg></button>
      <button aria-label="Ground"><svg><use href="#fhoriz"/></svg></button>
      <button aria-label="Lock face"><svg><use href="#flock"/></svg></button>
    </div></div><h2>Face Relate</h2></div>
  <div class="group pat"><div class="tools"><div class="grid two">
      <button class="split" aria-label="Pattern"><svg><use href="#pattern"/></svg><i></i></button>
      <button aria-label="Mirror feature"><svg><use href="#pmirror"/></svg></button>
    </div></div><h2>Pattern</h2></div>
  <div class="group orient"><div class="tools">
    <button class="big"><svg><use href="#zoomarea"/></svg>Zoom<br>Area</button>
    <button class="big"><svg><use href="#fit"/></svg>Fit</button>
    <div class="grid">
      <button aria-label="Zoom"><svg><use href="#zoom"/></svg></button>
      <button aria-label="Look at face"><svg><use href="#camera"/></svg></button>
      <button aria-label="Rotate"><svg><use href="#rotate"/></svg></button>
      <button aria-label="Pan"><svg><use href="#pan"/></svg></button>
      <button aria-label="Spin about"><svg><use href="#spin"/></svg></button>
      <button aria-label="Sketch view"><svg><use href="#sketchview"/></svg></button>
      <button aria-label="Previous view"><svg><use href="#windows"/></svg></button>
      <button aria-label="View orientation"><svg><use href="#graymove"/></svg></button>
    </div></div><h2>Orient</h2></div>
  <div class="group style"><div class="tools">
    <div class="cubes">
      <button aria-label="Wire frame"><svg><use href="#cubewire"/></svg></button>
      <button aria-label="Hidden edges"><svg><use href="#cubedash"/></svg></button>
      <button aria-label="Visible edges"><svg><use href="#cubeline"/></svg></button>
      <button aria-label="Shaded"><svg><use href="#cubefill"/></svg></button>
      <button class="on" aria-label="Shaded with edges"><svg><use href="#cubeedge"/></svg></button>
    </div>
    <div class="stylebox">
      <label for="style"><svg><use href="#aslash"/></svg>Styles</label>
      <div class="combo"><select id="style"><option>Default</option></select><i></i></div>
    </div></div><h2>Style</h2></div>
  <div class="group win"><div class="tools">
    <button class="big"><svg><use href="#switch"/></svg>Switch<span>Windows<i></i></span></button>
    </div><h2>Window</h2></div>
</section>

<div class="quick" role="toolbar" aria-label="Quick access">
  <button aria-label="Save"><svg><use href="#save"/></svg></button>
  <button class="split" aria-label="Undo"><svg><use href="#undo"/></svg><i></i></button>
  <button class="split" aria-label="Redo"><svg><use href="#redo"/></svg><i></i></button>
  <button class="split" aria-label="Sheets"><svg><use href="#sheet"/></svg><i class="dark"></i></button>
</div>

<main class="work">
  <aside class="rail" aria-label="Left panels">
    <button><svg><use href="#key"/></svg><span>Generative Design</span></button>
    <button><svg><use href="#flo"/></svg><span>FloEFD Analysis</span></button>
    <button><svg><use href="#nastran"/></svg><span>NX Nastran Log Viewer</span></button>
    <button aria-label="Documents"><svg><use href="#copydoc"/></svg></button>
    <button aria-label="Sensors"><svg><use href="#gauge"/></svg></button>
    <button aria-label="Playback"><svg><use href="#movie"/></svg></button>
    <button aria-label="Simulation results"><svg><use href="#heat"/></svg></button>
    <button><svg><use href="#library"/></svg><span>Feature Library</span></button>
    <button aria-label="Family of parts"><svg><use href="#cubes"/></svg></button>
  </aside>

  <div class="center">
    <div class="doctabs">
      <div class="doctab"><svg><use href="#part"/></svg><span>yoke</span><button aria-label="Close yoke">×</button></div>
      <div class="doctab current"><svg><use href="#part"/></svg><span>plate</span><button aria-label="Close plate">×</button></div>
      <div class="tabnav">
        <button aria-label="Previous tab"><svg><use href="#tleft"/></svg></button>
        <button aria-label="Next tab"><svg><use href="#tright"/></svg></button>
        <button aria-label="Tab list"><svg><use href="#tdown"/></svg></button>
        <button aria-label="Close tab"><svg><use href="#close"/></svg></button>
      </div>
    </div>

    <div class="viewport">
      <svg class="scene" viewBox="20 130 1241 558" preserveAspectRatio="xMinYMin slice" role="img" aria-label="Plate model">
        <defs>
          <g id="bore"><ellipse cx="2" rx="8" ry="10.500" transform="rotate(14)" fill="#5f5b70"/><ellipse cx="3.500" cy="2" rx="6" ry="8" transform="rotate(14)" fill="#8c899a"/><ellipse cx="-1" rx="6" ry="10" transform="rotate(20)" fill="#fafafa"/></g>
        </defs>
        <path fill="#575363" d="M115 232Q116 222 124 219L150 215 790 127H830L128 222Q120 225 119 234L115 540Q115 551 125 555 112 554 110 541z"/>
        <path fill="#7a748c" d="M116 235Q116 222 130 220L122 226 118 540 125 554Q113 553 111 540z"/>
        <path fill="#8882a0" stroke="#686279" stroke-width=".6" d="M119 236Q119 222 132 220L804 128H1107L1103 405Q1102 420 1089 423L985 438V451L829 473 822 471V461L391 518V531L234 553 228 551V542L127 555Q116 554 115 541z"/>
        <path fill="#5e596c" d="M577 215L646 207Q651 208 651 213L649 418Q649 426 641 428L573 437z"/>
        <path fill="#737080" d="M648 209h2l-2 212-5 5z"/>
        <path fill="#fafafa" stroke="#555063" stroke-width=".6" d="M573 224Q574 216 581 215L643 207.500Q647 207 647 211L645 416Q644 426 637 427L576 435Q571 436 571 430z"/>
        <use href="#bore" x="255" y="276"/><use href="#bore" x="374" y="260"/><use href="#bore" x="253" y="457"/><use href="#bore" x="372" y="441"/>
        <use href="#bore" x="848" y="195"/><use href="#bore" x="967" y="179"/><use href="#bore" x="846" y="376"/><use href="#bore" x="965" y="360"/>
        <path stroke="#1b1bb4" stroke-width="1.600" d="M606 320v-22"/><path fill="#1b1bb4" d="M603 300l3-10 3 10z"/>
        <path stroke="#b31220" stroke-width="1.600" d="M606 321l-16 2"/><path fill="#b31220" d="M589 320l-10 4 10 1z"/>
        <path stroke="#25cf33" stroke-width="1.600" d="M606 321l10 4"/><path fill="#25cf33" d="M615 321l7 6-9-1z"/>
        <circle cx="606" cy="321" r="3" fill="#f0e21c"/>
        <text class="axis" x="603" y="286" fill="#1b1bb4">Z</text><text class="axis heavy" x="569" y="328" fill="#b31220">X</text><text class="axis" x="622" y="331" fill="#25cf33">Y</text>
        <path fill="#fff" stroke="#222" d="M1003 472v10l2.500-2 2 4 2-1-2-4h3z"/>
        <path fill="#fcfcfc" stroke="#888" stroke-width=".7" d="M1196 629l25-3 20 5v33l-29 6-16-10zM1196 629l16 4 29-2M1212 633v37"/>
        <path stroke="#7474c8" stroke-width=".8" d="M1218 631v15"/><path stroke="#d65a5a" stroke-width=".8" d="M1218 646l-16 2"/><circle cx="1218" cy="646" r="1.800" fill="#9bd25b"/>
        <text class="cube" x="1218" y="654" transform="rotate(-4 1218 654)">BACK</text>
        <text class="cubesm" x="1198" y="647" transform="rotate(22 1198 647)">RIGHT</text>
        <text class="cubesm" x="1213" y="632">TOP</text>
      </svg>

      <div class="tree">
        <div class="grip"></div>
        <ul>
          <li class="l0"><span class="node"><svg><use href="#partsm"/></svg>plate</span></li>
          <li class="l1"><b></b><input type="checkbox" id="c1" checked><label class="node" for="c1"><svg><use href="#axes"/></svg>Base</label></li>
          <li class="l2"><span class="node"><svg><use href="#material"/></svg>Material (None)</span></li>
          <li class="l1"><button aria-label="Expand">+</button><input type="checkbox" id="c2"><label class="node off" for="c2"><svg><use href="#refplane"/></svg>Base Reference Planes</label></li>
          <li class="l1"><button aria-label="Expand">+</button><input type="checkbox" id="c3" checked><label class="node" for="c3"><svg><use href="#bodies"/></svg>Design Bodies</label></li>
          <li class="l1"><button aria-label="Collapse">−</button><span class="sync"><svg><use href="#sync"/></svg>Synchronous<em></em></span></li>
          <li class="l3"><button aria-label="Collapse">−</button><span class="node"><svg><use href="#features"/></svg>Features</span></li>
          <li class="l4"><svg><use href="#info"/></svg><span class="node"><svg><use href="#partsm"/></svg>Part Copy 1</span></li>
        </ul>
      </div>

      <div class="recorder">
        <button aria-label="Microphone"><svg viewBox="0 0 20 20"><rect x="8" y="4" width="4" height="8" rx="2" fill="#fff"/><path stroke="#ddd" d="M6 9c0 6 8 6 8 0M10 14v3M8 17h4"/></svg></button>
        <button aria-label="Recording options"><svg viewBox="0 0 20 20"><circle cx="10" cy="10" r="6.500" stroke="#ddd" stroke-width="1.400" stroke-dasharray="17 3.400" stroke-dashoffset="6"/><path fill="#eee" d="M4 3l4 1-3 3zM16 17l-4-1 3-3z"/></svg></button>
      </div>
    </div>

    <div class="prompt">
      <label for="prompt"><svg><use href="#keyboard"/></svg>PromptBar</label>
      <input id="prompt" type="text">
      <div class="ptools">
        <button aria-label="Larger text">A<sup>▴</sup></button>
        <button class="small" aria-label="Smaller text">A<sup>▾</sup></button>
        <button aria-label="Collapse"><svg><use href="#chev"/></svg></button>
        <button aria-label="Options"><svg><use href="#bardown"/></svg></button>
        <button aria-label="Pin"><svg><use href="#pin"/></svg></button>
        <button aria-label="Close prompt bar"><svg><use href="#close"/></svg></button>
      </div>
    </div>
  </div>

  <aside class="rail right" aria-label="Right panels">
    <button aria-label="YouTube"><svg><use href="#youtube"/></svg></button>
    <button><svg><use href="#learn"/></svg><span>Learn Solid Edge</span></button>
    <button><svg><use href="#fb"/></svg><span>Facebook</span></button>
    <button><svg><use href="#community"/></svg><span>Solid Edge Community</span></button>
    <button><svg><use href="#reqs"/></svg><span>Requirements</span></button>
  </aside>
</main>

<footer class="status">
  <strong>Design Intent adjusting 2 faces</strong>
  <input type="text" placeholder="Find a command" aria-label="Find a command">
  <div class="sicons">
    <button aria-label="Run"><svg><use href="#go"/></svg></button>
    <button aria-label="Zoom area"><svg><use href="#s-area"/></svg></button>
    <button aria-label="Zoom"><svg><use href="#s-zoom"/></svg></button>
    <button aria-label="Fit"><svg><use href="#s-fit"/></svg></button>
    <button aria-label="Look at face"><svg><use href="#camera"/></svg></button>
    <button aria-label="Rotate"><svg><use href="#s-green"/></svg></button>
    <button aria-label="Pan"><svg><use href="#s-pan"/></svg></button>
    <button aria-label="Views"><svg><use href="#windows"/></svg></button>
    <button aria-label="Orientation"><svg><use href="#s-move"/></svg></button>
    <button aria-label="Play"><svg><use href="#s-play"/></svg></button>
    <button aria-label="Windows"><svg><use href="#s-win"/></svg></button>
    <button aria-label="Zoom out"><svg><use href="#s-minus"/></svg></button>
    <input type="range" min="0" max="100" value="42" aria-label="Zoom level">
    <button aria-label="Zoom in"><svg><use href="#s-plus"/></svg></button>
    <button aria-label="Record"><svg><use href="#s-rec"/></svg></button>
    <button aria-label="Upload"><svg><use href="#s-up"/></svg></button>
  </div>
</footer>
</body>
</html>
```
FILE: styles.css
```
* { box-sizing: border-box; }
body {
  margin: 0;
  height: 100vh;
  display: flex;
  flex-direction: column;
  overflow: hidden;
  font: 8px/10px Roboto, "Open Sans", sans-serif;
  color: #333;
  background: #fafafa;
}
button, input, select { font: inherit; color: inherit; margin: 0; }
button { border: 0; padding: 0; background: none; display: flex; align-items: center; justify-content: center; }
svg { width: 14px; height: 14px; fill: none; display: block; flex: none; }
.sprite { position: absolute; width: 0; height: 0; }
h1, h2, ul { margin: 0; padding: 0; font: inherit; }

/* icon palette */
.sn { stroke: #24307a; }
.sb { stroke: #4a86c4; }
.sv { stroke: #4d7fd0; }
.sr { stroke: #c8323c; }
.sg { stroke: #9a9a9a; }
.sk { stroke: #26264a; }
.so { stroke: #c98a1c; }
.fn { fill: #24307a; }
.fb { fill: #5aa0dc; }
.fr { fill: #c8323c; }
.fg { fill: #4fae58; }

i { width: 0; height: 0; border: 2px solid transparent; border-top-color: #777; border-bottom: 0; flex: none; }
i.dark { border-top-color: #222; }

.titlebar { flex: none; position: relative; height: 18px; background: #f0f0f0; display: flex; justify-content: center; align-items: center; }
.titlebar h1 { color: #333; }
.app { position: absolute; z-index: 2; left: 2px; top: 2px; width: 26px; height: 26px; border: 1px solid #5d7199; border-radius: 3px; background: #f4f8fc; }
.app svg { width: 24px; height: 24px; }
.notch { position: absolute; left: 50%; top: 0; width: 170px; height: 3px; border: solid #555; border-width: 0 1px 1px 0; background: linear-gradient(90deg, transparent 23px, #e0b04c 23px, #e0b04c 38px, transparent 38px, transparent 67px, #e0b04c 67px, #e0b04c 82px, transparent 82px); }
.wincontrols { position: absolute; right: 2px; top: 2px; display: flex; gap: 5px; }

.tabs { flex: none; height: 16px; display: flex; padding-left: 47px; background: #f0f0f0; border-bottom: 1px solid #dcdcdc; margin-bottom: -1px; position: relative; }
.tab { padding: 0 8px; border: solid transparent; border-width: 1px 1px 0; white-space: nowrap; }
.tab.active { background: #fbfbfb; border-color: #c6c8d4; color: #2b3c86; height: 16px; }
.brand { margin-left: auto; align-self: center; background: #fff; padding: 0 5px; color: #129482; font: bold 13px/13px "Open Sans", sans-serif; }
.doccontrols { display: flex; align-items: center; margin: 0 1px 0 29px; }
.doccontrols .sm { width: 11px; }
.doccontrols svg { width: 12px; height: 12px; margin: 0 1px; }

.ribbon { flex: none; display: flex; background: #fbfbfb; border-bottom: 1px solid #dedede; padding: 3px 0; }
.group { flex: none; display: flex; flex-direction: column; border-right: 1px solid #c4c4c4; }
.tools { display: flex; height: 42px; }
.group h2 { text-align: center; color: #707070; line-height: 9px; }
.grid { display: grid; grid-template-rows: repeat(3, 14px); grid-auto-flow: column; align-content: start; justify-items: start; }
.grid button { width: 14px; height: 14px; }
.grid .split, .quick .split { width: 21px; justify-content: flex-start; gap: 2px; }
.on { background: #ccd8f2; outline: 1px solid #b4c4e6; outline-offset: -1px; }
.big { width: 28px; flex-direction: column; justify-content: flex-start; line-height: 8px; gap: 1px; white-space: nowrap; }
.big svg { width: 24px; height: 24px; }
.big span { display: flex; align-items: center; gap: 1px; margin-top: -1px; }
.big.off { color: #a8a8a8; }
.clip { width: 59px; } .clip .tools { padding-left: 3px; } .clip .big { width: 30px; }
.sel { width: 49px; } .sel .tools { padding-left: 2px; } .sel .big { width: 30px; }
.planes { width: 27px; } .planes .tools { padding-left: 4px; }
.draw { width: 124px; } .draw .tools { padding-left: 3px; }
.spaced { margin-left: 4px; }
.relate { width: 82px; } .relate .tools { padding-left: 3px; }
.ruled { margin-left: 2px; padding-left: 1px; border-left: 1px solid #d8d8d8; }
.dim { width: 114px; } .dim .big { width: 44px; }
.ruled2 { margin-left: 1px; border-left: 1px solid #e0e0e0; }
.solids { width: 225px; } .solids .tools { padding-left: 3px; }
.solids .big { width: 29px; }
.solids .narrow { width: 24px; }
.solids .grid { margin-left: 3px; }
.solids .split { width: 18px; gap: 0; }
.face { width: 63px; } .face .tools { padding-left: 3px; }
.pat { width: 29px; } .pat .tools { padding-left: 4px; }
.two { grid-template-rows: repeat(2, 20px); align-items: center; }
.orient { width: 106px; } .orient .tools { padding-left: 3px; }
.style { width: 168px; } .style .tools { padding-left: 4px; }
.cubes { display: grid; grid-template: repeat(2, 21px) / repeat(3, 21px); }
.cubes svg { width: 20px; height: 20px; }
.stylebox { flex: 1; margin: 0 3px 0 4px; }
.stylebox label { display: flex; align-items: center; height: 14px; }
.combo { display: flex; align-items: center; height: 14px; padding-right: 3px; border: 1px solid #9a9a9a; background: #fff; }
.combo select { flex: 1; border: 0; padding: 0 2px; color: #222; background: none; appearance: none; }
.win { width: 50px; } .win .big { width: 49px; }

.quick { flex: none; display: flex; align-items: center; height: 18px; padding: 0 0 2px 1px; background: #fafafa; }
.quick .split:nth-child(2) { margin-left: 5px; }

.work { flex: 1; min-height: 0; display: flex; }
.rail { flex: none; width: 20px; background: #e1e2e4; display: flex; flex-direction: column; align-items: flex-start; gap: 9px; padding: 3px 0 0 1px; border-right: 1px solid #eee; }
.rail button { flex-direction: column; color: #34488a; }
.rail span { writing-mode: vertical-rl; padding: 1px 0 4px; font: 8px/12px "Open Sans", sans-serif; }
.rail.right { padding-left: 4px; border: 0; width: 19px; }

.center { flex: 1; min-width: 0; display: flex; flex-direction: column; }
.doctabs { flex: none; height: 19px; display: flex; background: #fdfdfd; }
.doctab { display: flex; align-items: center; width: 62px; padding: 0 2px 0 9px; color: #555; }
.doctab span { margin-left: 1px; flex: 1; }
.doctab button { font-size: 12px; width: 9px; }
.doctab.current { background: #2b4a90; color: #fff; }
.tabnav { margin-left: auto; display: flex; align-items: center; padding-right: 1px; }
.tabnav button { width: 9px; }
.tabnav svg { width: 12px; height: 12px; }

.viewport { flex: 1; min-height: 0; position: relative; overflow: hidden; border-top: 2px solid #b5aed6; border-bottom: 2px solid #d8d8d8; background: #fafafa; }
.scene { position: absolute; inset: 0; width: 100%; height: 100%; }
.axis { font: 9px "DejaVu Sans", sans-serif; }
.heavy { font-weight: bold; }
.cube { font: 8px "Liberation Sans", sans-serif; fill: #444; }
.cubesm { font: 5px "Liberation Sans", sans-serif; fill: #444; }

.tree { position: absolute; left: 0; top: 0; }
.grip { width: 165px; height: 5px; border: 1px solid #8c8c94; border-top-color: #55555f; background: repeating-linear-gradient(90deg, #777 0 1px, #dcdce0 1px 3px) center / 27px 2px no-repeat #dcdce0; }
.tree ul { list-style: none; display: grid; grid-auto-rows: 1fr; height: 85px; margin-top: 1px; color: #111; font: 600 7px/9px "Open Sans", sans-serif; }
.tree li { display: flex; align-items: center; gap: 3px; }
.tree li svg { width: 10px; height: 10px; }
.tree .node { display: flex; align-items: center; gap: 2px; height: 9px; padding-right: 4px; border: solid #ccc; border-width: 0 1px 1px 0; background: #fafafa; }
.tree .node.off { color: #777; font-weight: 400; }
.tree b { width: 7px; }
.tree button { width: 7px; height: 7px; border: 1px solid #999; background: #fff; font-size: 7px; line-height: 5px; color: #111; }
.tree input { appearance: none; width: 9px; height: 9px; border: 1px solid #345; background: #fff; display: grid; place-content: center; margin: 0 0 0 2px; }
.tree input:checked::after { content: "✓"; font: bold 8px/8px "DejaVu Sans", sans-serif; color: #111; }
.l0 { padding-left: 2px; } .l1 { padding-left: 8px; } .l2 { padding-left: 32px; } .l3 { padding-left: 24px; } .l4 { padding-left: 60px; }
.tree .l3 button { margin-right: 14px; }
.sync { display: flex; align-items: center; gap: 0; width: 122px; height: 10px; margin-left: 2px; padding: 0 6px 0 1px; border: 1px solid #d79a2a; background: linear-gradient(#fbd983, #efaf35); }
.sync em { margin-left: auto; border: solid transparent; border-width: 3px 0 3px 0; border-right: 11px solid #fff6dd; }

.recorder { position: absolute; right: 3px; bottom: 2px; display: flex; gap: 4px; }
.recorder button { width: 20px; height: 20px; border-radius: 4px; background: #454545; }
.recorder svg { width: 20px; height: 20px; }

.prompt { flex: none; height: 16px; display: flex; padding-top: 1px; background: #f0f0f0; }
.prompt label { display: flex; align-items: center; gap: 3px; padding: 0 5px 0 2px; color: #33487c; }
.prompt > input { flex: 1; min-width: 0; border: solid #8a8a8a; border-width: 1px 0 0 1px; background: #fff; padding: 0 4px; }
.ptools { display: flex; align-items: center; gap: 1px; padding: 0 1px 0 3px; }
.ptools button { width: 10px; }
.ptools button:first-child { width: 12px; font: bold 11px/12px "Liberation Serif", serif; color: #000; }
.ptools .small { font: bold 9px/12px "Liberation Serif", serif; color: #000; }
.ptools sup { font-size: 6px; line-height: 6px; align-self: flex-start; }
.ptools svg { width: 11px; height: 11px; }

.status { flex: none; height: 14px; display: flex; align-items: center; justify-content: flex-end; background: #2a5295; border-bottom: 1px solid #14224a; border-top: 1px solid #1d3b78; }
.status strong { color: #fff; font-weight: 500; margin-right: 50px; }
.status > input { width: 94px; height: 11px; border: 0; padding: 0 2px; background: #fff; }
.status > input::placeholder { color: #9a9a9a; }
.sicons { display: flex; align-items: center; }
.sicons button { width: 15px; height: 12px; }
.sicons button:first-child { width: 13px; }
.sicons svg { width: 12px; height: 12px; }
.sicons input { appearance: none; width: 74px; height: 12px; background: linear-gradient(#dfe7f5, #dfe7f5) center / 100% 1px no-repeat; }
.sicons input::-webkit-slider-thumb { appearance: none; width: 6px; height: 10px; border: 1px solid #dfe7f5; border-radius: 0 0 3px 3px; background: #5a7fc0; }
```
